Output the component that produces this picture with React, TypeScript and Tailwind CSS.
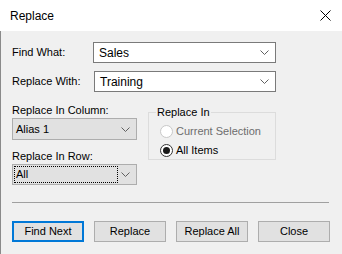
import React from "react";

function Chevron() {
  return (
    <svg width="9" height="5" viewBox="0 0 9 5" className="shrink-0">
      <path d="M0.5 0.5 L4.5 4.5 L8.5 0.5" fill="none" stroke="#606060" strokeWidth="1" />
    </svg>
  );
}

function Radio({ checked, disabled, label }: { checked?: boolean; disabled?: boolean; label: string }) {
  return (
    <div className="flex items-center h-[19px]">
      <div
        className={
          "w-[13px] h-[13px] rounded-full border flex items-center justify-center bg-white " +
          (disabled ? "border-[#c8c8c8]" : "border-[#333333]")
        }
      >
        {checked && <div className="w-[7px] h-[7px] rounded-full bg-[#1a1a1a]" />}
      </div>
      <span className={"ml-[3px] " + (disabled ? "text-[#6d6d6d]" : "text-black")}>{label}</span>
    </div>
  );
}

function Button({ label, focused }: { label: string; focused?: boolean }) {
  return (
    <div
      className={
        "w-[72px] h-[21px] flex items-center justify-center bg-[#e1e1e1] " +
        (focused ? "border-2 border-[#0078d7]" : "border border-[#adadad]")
      }
    >
      {label}
    </div>
  );
}

export default function App() {
  return (
    <div
      className="w-[342px] h-[254px] flex flex-col text-[11px] text-black overflow-hidden"
      style={{ fontFamily: '"Liberation Sans", Arial, sans-serif' }}
    >
      <div className="h-[31px] bg-white flex items-center justify-between pl-[10px] pr-[11px] shrink-0">
        <span className="text-[12px]">Replace</span>
        <svg width="11" height="11" viewBox="0 0 11 11">
          <path d="M0.5 0.5 L10.5 10.5 M10.5 0.5 L0.5 10.5" stroke="#000" strokeWidth="1" />
        </svg>
      </div>
      <div className="flex-1 bg-[#f0f0f0] border-l border-[#8a8a8a] pl-[11px] flex flex-col">
        <div className="flex items-center mt-[11px] h-[21px]">
          <span className="w-[81px]">Find What:</span>
          <div className="w-[183px] h-[21px] bg-white border border-[#7a7a7a] flex items-center justify-between pl-[5px] pr-[6px]">
            <span className="text-[12px]">Sales</span>
            <Chevron />
          </div>
        </div>
        <div className="flex items-center mt-[8px] h-[21px]">
          <span className="w-[82px]">Replace With:</span>
          <div className="w-[182px] h-[21px] bg-white border border-[#7a7a7a] flex items-center justify-between pl-[5px] pr-[6px]">
            <span className="text-[12px]">Training</span>
            <Chevron />
          </div>
        </div>
        <div className="flex mt-[11px]">
          <div className="w-[125px] flex flex-col">
            <span className="h-[14px] leading-[14px]">Replace In Column:</span>
            <div className="mt-[1px] h-[22px] bg-[#e1e1e1] border border-[#adadad] flex items-center justify-between pl-[3px] pr-[6px]">
              <span>Alias 1</span>
              <Chevron />
            </div>
            <span className="mt-[9px] h-[14px] leading-[14px]">Replace In Row:</span>
            <div className="mt-[1px] h-[21px] bg-[#e1e1e1] border border-[#adadad] flex items-center justify-between pl-[1px] pr-[6px]">
              <div className="w-[104px] h-[17px] border border-dotted border-black flex items-center pl-[1px]">
                All
              </div>
              <Chevron />
            </div>
          </div>
          <fieldset className="ml-[11px] w-[128px] h-[55px] border border-[#dcdcdc] pl-[11px] pt-[3px] mt-[2px]">
            <legend className="ml-[-4px] px-[1px] leading-[14px]">Replace In</legend>
            <Radio disabled label="Current Selection" />
            <Radio checked label="All Items" />
          </fieldset>
        </div>
        <div className="mt-[17px] w-[317px] h-px bg-[#a0a0a0]" />
        <div className="mt-[18px] w-[318px] flex justify-between">
          <Button label="Find Next" focused />
          <Button label="Replace" />
          <Button label="Replace All" />
          <Button label="Close" />
        </div>
      </div>
    </div>
  );
}
